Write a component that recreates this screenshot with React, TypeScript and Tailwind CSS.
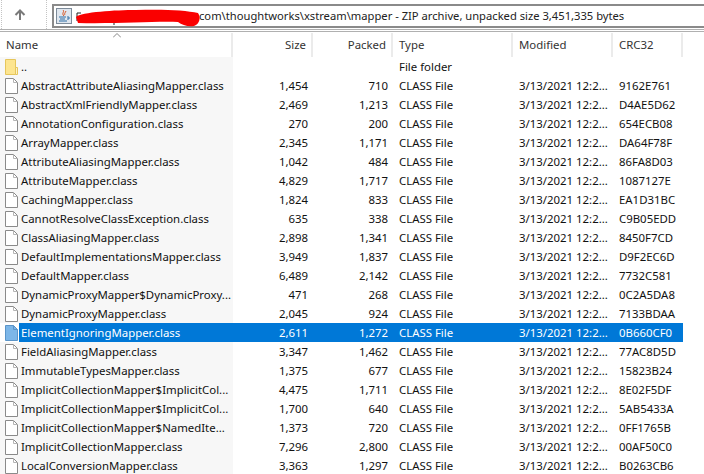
const ROWS = [
  ["..", "", "", "File folder", "", ""],
  ["AbstractAttributeAliasingMapper.class", "1,454", "710", "CLASS File", "3/13/2021 12:2...", "9162E761"],
  ["AbstractXmlFriendlyMapper.class", "2,469", "1,213", "CLASS File", "3/13/2021 12:2...", "D4AE5D62"],
  ["AnnotationConfiguration.class", "270", "200", "CLASS File", "3/13/2021 12:2...", "654ECB08"],
  ["ArrayMapper.class", "2,345", "1,171", "CLASS File", "3/13/2021 12:2...", "DA64F78F"],
  ["AttributeAliasingMapper.class", "1,042", "484", "CLASS File", "3/13/2021 12:2...", "86FA8D03"],
  ["AttributeMapper.class", "4,829", "1,717", "CLASS File", "3/13/2021 12:2...", "1087127E"],
  ["CachingMapper.class", "1,824", "833", "CLASS File", "3/13/2021 12:2...", "EA1D31BC"],
  ["CannotResolveClassException.class", "635", "338", "CLASS File", "3/13/2021 12:2...", "C9B05EDD"],
  ["ClassAliasingMapper.class", "2,898", "1,341", "CLASS File", "3/13/2021 12:2...", "8450F7CD"],
  ["DefaultImplementationsMapper.class", "3,949", "1,837", "CLASS File", "3/13/2021 12:2...", "D9F2EC6D"],
  ["DefaultMapper.class", "6,489", "2,142", "CLASS File", "3/13/2021 12:2...", "7732C581"],
  ["DynamicProxyMapper$DynamicProxy...", "471", "268", "CLASS File", "3/13/2021 12:2...", "0C2A5DA8"],
  ["DynamicProxyMapper.class", "2,045", "924", "CLASS File", "3/13/2021 12:2...", "7133BDAA"],
  ["ElementIgnoringMapper.class", "2,611", "1,272", "CLASS File", "3/13/2021 12:2...", "0B660CF0"],
  ["FieldAliasingMapper.class", "3,347", "1,462", "CLASS File", "3/13/2021 12:2...", "77AC8D5D"],
  ["ImmutableTypesMapper.class", "1,375", "677", "CLASS File", "3/13/2021 12:2...", "15823B24"],
  ["ImplicitCollectionMapper$ImplicitCol...", "4,475", "1,711", "CLASS File", "3/13/2021 12:2...", "8E02F5DF"],
  ["ImplicitCollectionMapper$ImplicitCol...", "1,700", "640", "CLASS File", "3/13/2021 12:2...", "5AB5433A"],
  ["ImplicitCollectionMapper$NamedIte...", "1,373", "720", "CLASS File", "3/13/2021 12:2...", "0FF1765B"],
  ["ImplicitCollectionMapper.class", "7,296", "2,800", "CLASS File", "3/13/2021 12:2...", "00AF50C0"],
  ["LocalConversionMapper.class", "3,363", "1,297", "CLASS File", "3/13/2021 12:2...", "B0263CB6"],
];

const SELECTED = 14;

function FileIcon({ selected }: { selected: boolean }) {
  return (
    <svg width="13" height="16" viewBox="0 0 13 16" className="shrink-0">
      <path
        d="M.5 .5H8.5L12.5 4.5V15.5H.5Z"
        fill={selected ? "#7cb6e8" : "#ffffff"}
        stroke={selected ? "#5a94c8" : "#8a8a8a"}
      />
      <path d="M8.5 .5V4.5H12.5" fill="none" stroke={selected ? "#5a94c8" : "#b5b5b5"} />
    </svg>
  );
}

function FolderIcon() {
  return (
    <svg width="13" height="16" viewBox="0 0 13 16" className="shrink-0">
      <path d="M.5 .5H10.5V15.5H.5Z" fill="#fde58f" stroke="#e6c65c" />
      <path d="M10.5 10V15.5H12.5V8.5H10.5Z" fill="#fff3c4" stroke="#e6c65c" />
    </svg>
  );
}

function JarIcon() {
  return (
    <svg width="16" height="16" viewBox="0 0 16 16" className="shrink-0">
      <rect x=".5" y=".5" width="15" height="15" fill="#dfe6ee" stroke="#7d8b99" />
      <path d="M7 2C9 4 5 5 8 8M10 3C9 5 8 6 9 7" fill="none" stroke="#d9531e" />
      <path d="M3 9H10M4 11H9M3 13H11" stroke="#2f6ea5" />
      <path d="M11 9H13V11H11" fill="none" stroke="#2f6ea5" />
    </svg>
  );
}

function HeaderCell({ label, className }: { label: string; className: string }) {
  return (
    <div className={`flex h-[24px] items-center border-r-2 border-[#ebebeb] ${className}`}>
      {label}
    </div>
  );
}

export default function App() {
  return (
    <div className="flex h-[474px] w-[704px] flex-col overflow-hidden bg-white font-['Noto_Sans','Open_Sans',sans-serif] text-[11.4px] text-[#111]">
      <div className="flex h-[29px] shrink-0 items-start">
        <div className="flex h-[29px] w-[46px] shrink-0 items-center justify-between border-x border-dotted border-[#c4c4c4] ml-[1px]">
          <svg width="12" height="12" viewBox="0 0 12 12" className="ml-[12px]">
            <path d="M6 11V1.5M1.5 6L6 1.5L10.5 6" fill="none" stroke="#7a7a7a" strokeWidth="2" />
          </svg>
        </div>
        <div className="relative ml-[5px] mt-[4px] flex h-[24px] flex-1 items-center border-y-2 border-l-2 border-[#8a8a8a] bg-white pl-[2px]">
          <JarIcon />
          <span className="ml-[127px] whitespace-nowrap text-[11.2px] leading-none text-[#222]">
            com\thoughtworks\xstream\mapper - ZIP archive, unpacked size 3,451,335 bytes
          </span>
          <svg width="126" height="20" viewBox="0 0 126 20" className="absolute left-[22px] top-[2px]">
            <path d="M1 5V13M1 5H5M38 13V17" fill="none" stroke="#222" />
            <path
              d="M0 9C5 4 40 2 60 2C85 1 110 2 122 5C125 9 124 16 118 18C112 19 106 17 102 14C80 13 40 16 2 15Z"
              fill="#fa0000"
            />
          </svg>
        </div>
      </div>
      <div className="h-[3px] shrink-0 border-y border-[#b0b0b0]" />
      <div className="relative flex h-[25px] shrink-0 items-end text-[#333]">
        <svg width="8" height="5" viewBox="0 0 8 5" className="absolute left-[113px] top-[1px]">
          <path d="M0 4.5L4 .5L8 4.5" fill="none" stroke="#888" />
        </svg>
        <HeaderCell label="Name" className="w-[233px] pl-[6px]" />
        <HeaderCell label="Size" className="w-[80px] justify-end pr-[5px]" />
        <HeaderCell label="Packed" className="w-[80px] justify-end pr-[5px]" />
        <HeaderCell label="Type" className="w-[120px] pl-[6px]" />
        <HeaderCell label="Modified" className="w-[100px] pl-[6px]" />
        <HeaderCell label="CRC32" className="w-[70px] pl-[6px]" />
      </div>
      <div className="flex min-h-0 flex-1 flex-col">
        {ROWS.map((row, i) => (
          <div key={i} className="flex h-[19px] w-[683px] shrink-0 items-center">
            <div className="flex h-full w-[233px] shrink-0 items-center bg-[#f7f7f7]">
              <div className={`flex h-full w-[19px] shrink-0 items-center pl-[5px] ${i === SELECTED ? "bg-white" : ""}`}>
                {i === 0 ? <FolderIcon /> : <FileIcon selected={i === SELECTED} />}
              </div>
              <span className={`flex h-full flex-1 items-center whitespace-nowrap pl-[2px] ${i === SELECTED ? "bg-[#0078d7] text-white" : ""}`}>
                {row[0]}
              </span>
            </div>
            <div className={`flex h-full flex-1 items-center ${i === SELECTED ? "bg-[#0078d7] text-white" : ""}`}>
              <span className="w-[80px] pr-[5px] text-right">{row[1]}</span>
              <span className="w-[80px] pr-[5px] text-right">{row[2]}</span>
              <span className="w-[120px] pl-[6px]">{row[3]}</span>
              <span className="w-[100px] pl-[6px]">{row[4]}</span>
              <span className="w-[70px] pl-[6px]">{row[5]}</span>
            </div>
          </div>
        ))}
      </div>
    </div>
  );
}
